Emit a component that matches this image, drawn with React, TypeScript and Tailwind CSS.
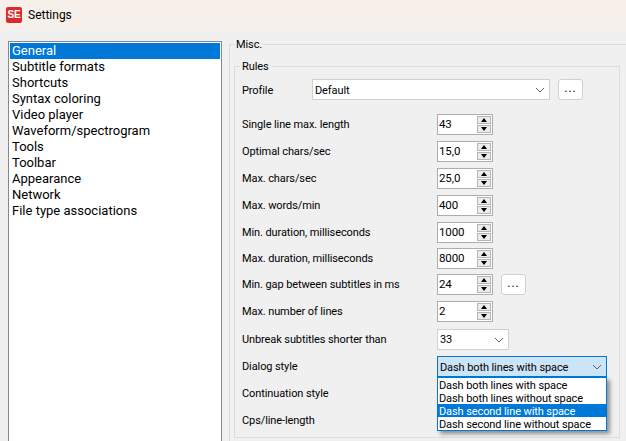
const CATEGORIES = [
  "General",
  "Subtitle formats",
  "Shortcuts",
  "Syntax coloring",
  "Video player",
  "Waveform/spectrogram",
  "Tools",
  "Toolbar",
  "Appearance",
  "Network",
  "File type associations",
];

const DIALOG_STYLES = [
  "Dash both lines with space",
  "Dash both lines without space",
  "Dash second line with space",
  "Dash second line without space",
];

function Chevron() {
  return (
    <svg width="10" height="6" viewBox="0 0 10 6" className="shrink-0">
      <path d="M1 1l4 4 4-4" fill="none" stroke="#606060" strokeWidth="1" />
    </svg>
  );
}

function Spinner({ value }: { value: string }) {
  return (
    <div className="flex h-[21px] w-14 items-center border border-[#adadad] bg-white pl-[1px]">
      <span className="flex-1 text-[11.5px] leading-none">{value}</span>
      <div className="mr-[1px] flex h-[17px] w-[14px] flex-col gap-[1px]">
        <div className="flex flex-1 items-center justify-center border border-[#b5b5b5] bg-[#ececec]">
          <span className="h-0 w-0 border-x-[3.5px] border-b-[4px] border-x-transparent border-b-black" />
        </div>
        <div className="flex flex-1 items-center justify-center border border-[#b5b5b5] bg-[#ececec]">
          <span className="h-0 w-0 border-x-[3.5px] border-t-[4px] border-x-transparent border-t-black" />
        </div>
      </div>
    </div>
  );
}

function MoreButton() {
  return (
    <button className="flex h-[21px] w-[25px] items-center justify-center rounded-[3px] border border-[#d0d0d0] bg-white pb-1 text-[12px] tracking-[1px]">
      ...
    </button>
  );
}

function Row({
  label,
  className,
  children,
}: {
  label: string;
  className?: string;
  children?: React.ReactNode;
}) {
  return (
    <div className={`flex h-[21px] items-center ${className ?? ""}`}>
      <span className="mt-[2px] w-[195px] shrink-0">{label}</span>
      {children}
    </div>
  );
}

export default function App() {
  return (
    <div className="flex h-[441px] w-[626px] flex-col overflow-hidden bg-[#f0f0f0] font-['Roboto',sans-serif] text-[11px] tracking-[-0.1px] text-black">
      <div className="flex h-[30px] shrink-0 items-center gap-[6px] bg-[#f6efea] pl-[6px]">
        <div className="flex h-[16px] w-[16px] items-center justify-center rounded-[2px] bg-[#d92b2b] font-['Liberation_Sans',sans-serif] text-[10px] leading-none font-bold text-white">
          SE
        </div>
        <span className="text-[12px] tracking-normal">Settings</span>
      </div>

      <div className="flex min-h-0 flex-1 pt-[11px] pl-2">
        <ul className="h-[420px] w-[214px] shrink-0 border border-[#828790] bg-white p-[1px] text-[13px] leading-4 tracking-normal">
          {CATEGORIES.map((name, i) => (
            <li key={name} className={i === 0 ? "bg-[#0078d7] pl-[2px] text-white" : "pl-[2px]"}>
              {name}
            </li>
          ))}
        </ul>

        <div className="relative mt-[3px] ml-[7px] flex-1 border-t border-l border-[#dcdcdc] pt-[21px] pl-[4px]">
          <span className="absolute top-[-8px] left-[5px] bg-[#f0f0f0] px-[1px] leading-4">Misc.</span>

          <div className="relative mr-[6px] flex h-[372px] flex-col border border-[#dcdcdc] pt-[12px] pl-[7px]">
            <span className="absolute top-[-8px] left-[5px] bg-[#f0f0f0] px-[2px] leading-4">Rules</span>

            <div className="flex h-[21px] items-center">
              <span className="mt-[3px] w-[70px]">Profile</span>
              <div className="flex h-[21px] w-[238px] items-center justify-between border border-[#d0d0d0] bg-white pr-[4px] pl-[2px]">
                <span className="mt-[3px]">Default</span>
                <Chevron />
              </div>
              <div className="ml-2">
                <MoreButton />
              </div>
            </div>

            <div className="flex flex-col">
              <Row label="Single line max. length" className="mt-[14px]"><Spinner value="43" /></Row>
              <Row label="Optimal chars/sec" className="mt-[6px]"><Spinner value="15,0" /></Row>
              <Row label="Max. chars/sec" className="mt-[6px]"><Spinner value="25,0" /></Row>
              <Row label="Max. words/min" className="mt-[6px]"><Spinner value="400" /></Row>
              <Row label="Min. duration, milliseconds" className="mt-[6px]"><Spinner value="1000" /></Row>
              <Row label="Max. duration, milliseconds" className="mt-[5px]"><Spinner value="8000" /></Row>
              <Row label="Min. gap between subtitles in ms" className="mt-[5px]">
                <Spinner value="24" />
                <div className="ml-2">
                  <MoreButton />
                </div>
              </Row>
              <Row label="Max. number of lines" className="mt-[6px]"><Spinner value="2" /></Row>
              <Row label="Unbreak subtitles shorter than" className="mt-[7px]">
                <div className="flex h-[21px] w-[72px] items-center justify-between border border-[#d0d0d0] bg-white pr-[4px] pl-[2px]">
                  <span className="mt-[2px]">33</span>
                  <Chevron />
                </div>
              </Row>
              <Row label="Dialog style" className="mt-[6px]">
                <div className="relative flex h-[21px] w-[170px] items-center justify-between border border-[#0078d7] bg-[#cce4f7] pr-[4px] pl-[2px]">
                  <span className="mt-[3px]">Dash both lines with space</span>
                  <Chevron />
                  <ul className="absolute top-[20px] left-[-1px] w-[170px] border border-[#0078d7] bg-white leading-[13px] shadow-[3px_3px_4px_rgba(0,0,0,0.4)]">
                    {DIALOG_STYLES.map((s, i) => (
                      <li
                        key={s}
                        className={
                          i === 2
                            ? "h-[13px] bg-[#0078d7] pt-[1px] pl-[1px] text-white"
                            : "h-[13px] pt-[1px] pl-[1px]"
                        }
                      >
                        {s}
                      </li>
                    ))}
                  </ul>
                </div>
              </Row>
              <Row label="Continuation style" className="mt-[6px]" />
              <Row label="Cps/line-length" className="mt-[6px]" />
            </div>
          </div>
        </div>
      </div>
    </div>
  );
}
